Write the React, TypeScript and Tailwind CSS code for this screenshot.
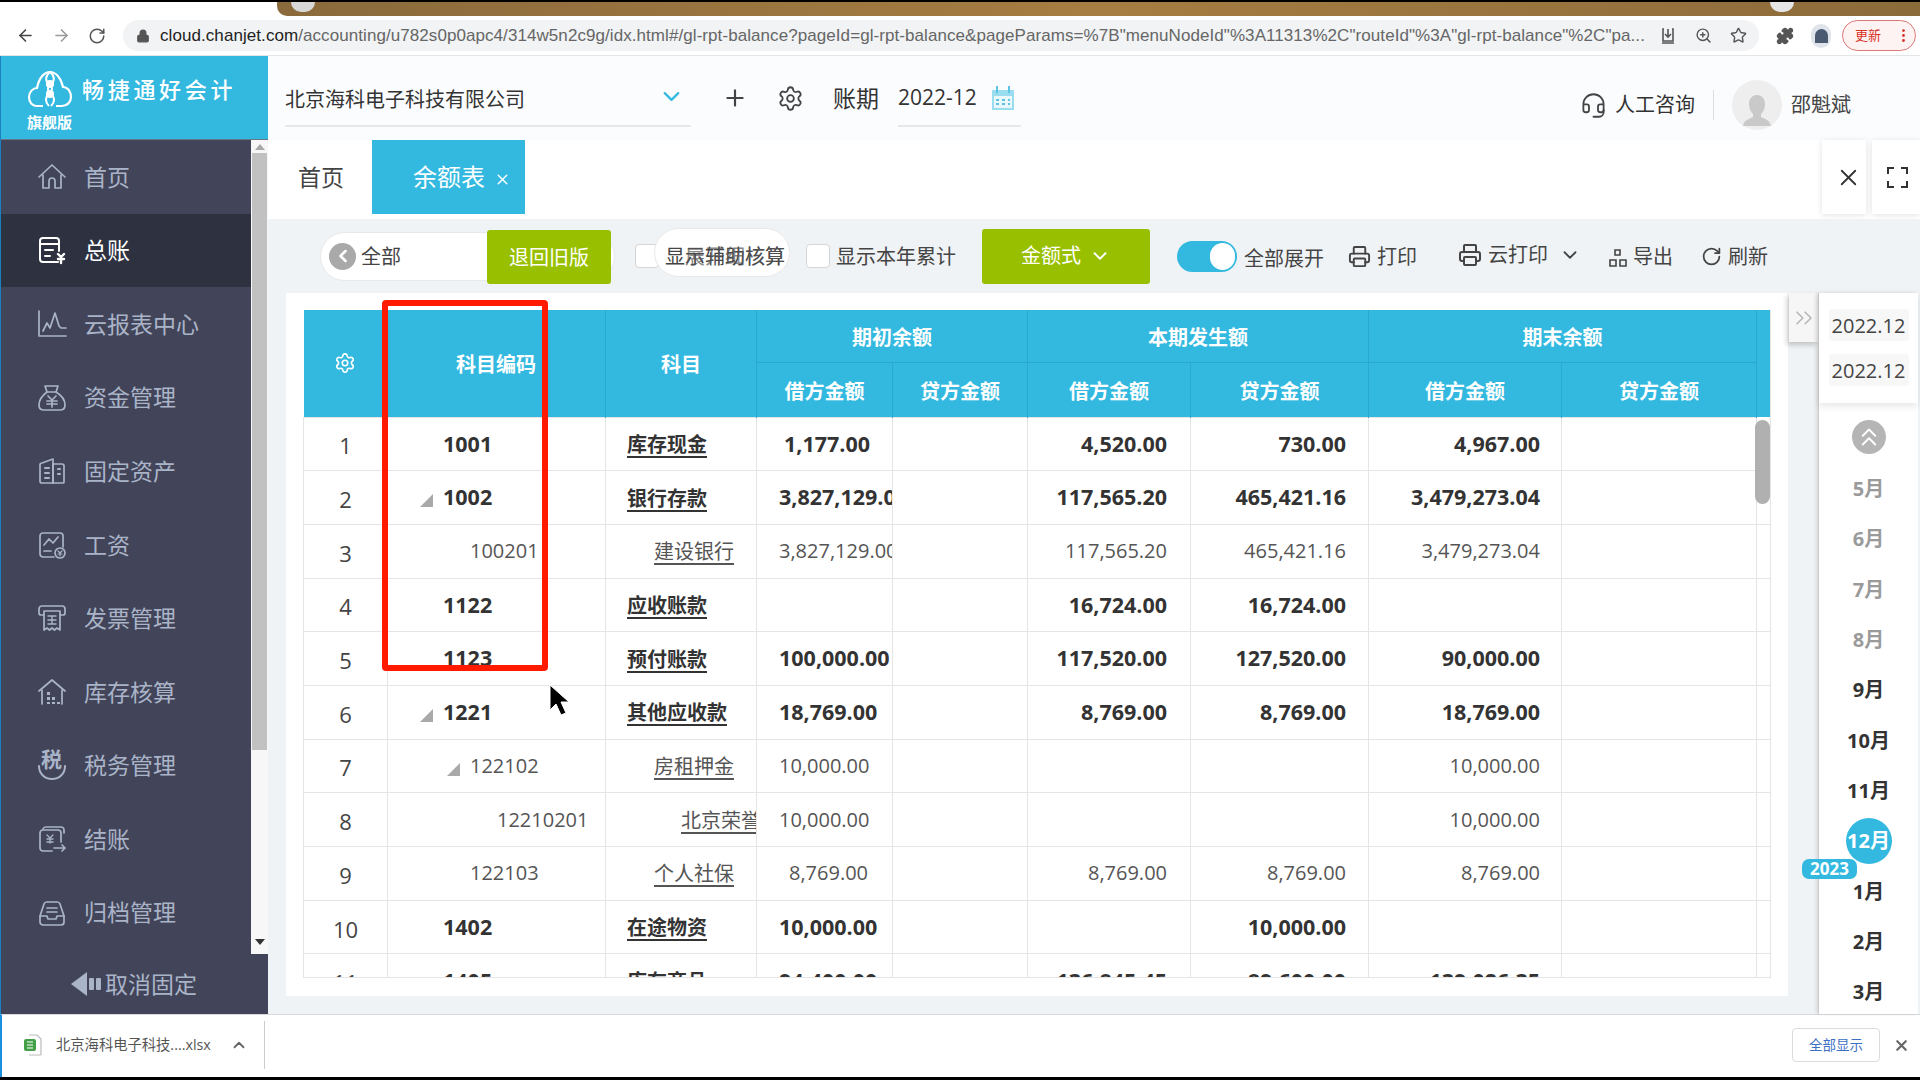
import React from "react";
import {
  ArrowLeft,
  ArrowRight,
  ChevronDown,
  ChevronLeft,
  ChevronUp,
  ChevronsRight,
  ChevronsUp,
  Headset,
  Lock,
  MoreVertical,
  Plus,
  Printer,
  Puzzle,
  RotateCw,
  Settings,
  Star,
  X,
  ZoomIn,
} from "lucide-react";

const iconProps = {
  width: 30,
  height: 30,
  viewBox: "0 0 30 30",
  fill: "none",
  stroke: "currentColor",
  strokeWidth: 1.7,
  strokeLinecap: "round" as const,
  strokeLinejoin: "round" as const,
};

const HomeIcon = () => (
  <svg {...iconProps}>
    <path d="M2 15 15 3l13 12" />
    <path d="M6 13v13h6v-7a3 3 0 0 1 6 0v7h6V13" />
  </svg>
);
const LedgerIcon = () => (
  <svg {...iconProps} strokeWidth={2}>
    <path d="M21 27H6a3 3 0 0 1-3-3V6a3 3 0 0 1 3-3h13a3 3 0 0 1 3 3v10" />
    <path d="M3 9h19M8 15h8M8 21h5" />
    <path d="M21 19l3 3 3-3M24 22v6M21 24h6" strokeWidth={2.4} />
  </svg>
);
const ReportIcon = () => (
  <svg {...iconProps}>
    <path d="M2 2v25h27" />
    <path d="M6 22l4-8 3 5 5-15 4 13 2 2h5" />
  </svg>
);
const MoneyIcon = () => (
  <svg {...iconProps}>
    <path d="M10 9 8 3h13l-2 6" />
    <path d="M10 9h9c5 3 9 8 9 13 0 3-2 5-5 5H7c-3 0-5-2-5-5 0-5 4-10 8-13Z" />
    <path d="m11 13 4 4 4-4M15 17v7M10 18h10M10 21h10" />
  </svg>
);
const BuildingIcon = () => (
  <svg {...iconProps}>
    <path d="M16 3 5 7a2 2 0 0 0-2 2v16a2 2 0 0 0 2 2h21a1 1 0 0 0 1-1V10a2 2 0 0 0-2-2h-9V3Z" />
    <path d="M16 8v19M8 12h4M8 17h4M8 22h4M21 13h2M21 18h2" strokeWidth={2} />
  </svg>
);
const SalaryIcon = () => (
  <svg {...iconProps}>
    <path d="M17 27H6a3 3 0 0 1-3-3V6a3 3 0 0 1 3-3h17a3 3 0 0 1 3 3v11" />
    <path d="m7 15 5-6 4 4 5-6M7 21h7" />
    <circle cx="23" cy="23" r="5" />
    <path d="M21 21l2 2 2-2M23 23v3M21 24h4" strokeWidth={1.2} />
  </svg>
);
const InvoiceIcon = () => (
  <svg {...iconProps}>
    <path d="M7 12H4a2 2 0 0 1-2-2V6a3 3 0 0 1 3-3h20a3 3 0 0 1 3 3v4a2 2 0 0 1-2 2h-3" />
    <path d="M7 8h16v19l-3-2-2.500 2-2.500-2-2.500 2-2.500-2-3 2V8Z" />
    <path d="M11 13h8M11 17h8M11 21h8M15 13v8" strokeWidth={1.4} />
  </svg>
);
const StockIcon = () => (
  <svg {...iconProps}>
    <path d="M2 14 15 3l13 11" />
    <path d="M5 13v14M25 13v14" />
    <path d="M10 15h3v3h-3zM10 20h3v3h-3zM15 20h3v3h-3zM10 25h3v2h-3zM15 25h3v2h-3zM20 25h3v2h-3z" fill="currentColor" stroke="none" />
  </svg>
);
const CloseIcon = () => (
  <svg {...iconProps}>
    <path d="M27 9V6a3 3 0 0 0-3-3H9a3 3 0 0 0-3 2" />
    <path d="M15 27H6a3 3 0 0 1-3-3V9a3 3 0 0 1 3-3h15a3 3 0 0 1 3 3v9" />
    <path d="m10 11 3 3 3-3M13 14v5M10 15h6M10 18h6" strokeWidth={1.3} />
    <path d="M17 24h11m-3-3 3 3-3 3" />
  </svg>
);
const ArchiveIcon = () => (
  <svg {...iconProps}>
    <path d="M3 18 7 6a3 3 0 0 1 3-2h10a3 3 0 0 1 3 2l4 12" />
    <path d="M3 18h7l1 3h8l1-3h7v6a3 3 0 0 1-3 3H6a3 3 0 0 1-3-3v-6Z" />
    <path d="M10 10h10M10 14h10" />
  </svg>
);
const TaxIcon = () => (
  <div className="relative w-[30px] h-[30px]">
    <svg {...iconProps} strokeWidth={2}>
      <path d="M2 15c0 8 6 13 13 13s13-5 13-13" />
    </svg>
    <span className="absolute left-[4px] -top-[4px] text-[21px] leading-[24px] font-bold">税</span>
  </div>
);

const menu = [
  { label: "首页", icon: <HomeIcon /> },
  { label: "总账", icon: <LedgerIcon />, active: true },
  { label: "云报表中心", icon: <ReportIcon /> },
  { label: "资金管理", icon: <MoneyIcon /> },
  { label: "固定资产", icon: <BuildingIcon /> },
  { label: "工资", icon: <SalaryIcon /> },
  { label: "发票管理", icon: <InvoiceIcon /> },
  { label: "库存核算", icon: <StockIcon /> },
  { label: "税务管理", icon: <TaxIcon /> },
  { label: "结账", icon: <CloseIcon /> },
  { label: "归档管理", icon: <ArchiveIcon /> },
];

type Row = {
  code: string;
  name: string;
  level: number;
  open?: boolean;
  bold: boolean;
  d1?: string;
  d1Cls?: string;
  d2?: string;
  c2?: string;
  d3?: string;
};

const rows: Row[] = [
  { code: "1001", name: "库存现金", level: 0, bold: true, d1: "1,177.00", d1Cls: "pl-[27px]", d2: "4,520.00", c2: "730.00", d3: "4,967.00" },
  { code: "1002", name: "银行存款", level: 0, open: true, bold: true, d1: "3,827,129.00", d2: "117,565.20", c2: "465,421.16", d3: "3,479,273.04" },
  { code: "100201", name: "建设银行", level: 1, bold: false, d1: "3,827,129.00", d2: "117,565.20", c2: "465,421.16", d3: "3,479,273.04" },
  { code: "1122", name: "应收账款", level: 0, bold: true, d2: "16,724.00", c2: "16,724.00" },
  { code: "1123", name: "预付账款", level: 0, bold: true, d1: "100,000.00", d2: "117,520.00", c2: "127,520.00", d3: "90,000.00" },
  { code: "1221", name: "其他应收款", level: 0, open: true, bold: true, d1: "18,769.00", d2: "8,769.00", c2: "8,769.00", d3: "18,769.00" },
  { code: "122102", name: "房租押金", level: 1, open: true, bold: false, d1: "10,000.00", d3: "10,000.00" },
  { code: "12210201", name: "北京荣誉", level: 2, bold: false, d1: "10,000.00", d3: "10,000.00" },
  { code: "122103", name: "个人社保", level: 1, bold: false, d1: "8,769.00", d1Cls: "pl-[32px]", d2: "8,769.00", c2: "8,769.00", d3: "8,769.00" },
  { code: "1402", name: "在途物资", level: 0, bold: true, d1: "10,000.00", c2: "10,000.00" },
  { code: "1405", name: "库存商品", level: 0, bold: true, d1: "94,400.00", d2: "136,845.45", c2: "89,600.00", d3: "139,026.35" },
];

const codePad = ["pl-[55px]", "pl-[82px]", "pl-[109px]"];
const namePad = ["pl-[21px]", "pl-[48px]", "pl-[75px]"];
const arrowLeft = ["left-[32px]", "left-[59px]", "left-[86px]"];

const months = [
  { m: "5月", dim: true },
  { m: "6月", dim: true },
  { m: "7月", dim: true },
  { m: "8月", dim: true },
  { m: "9月" },
  { m: "10月" },
  { m: "11月" },
  { m: "12月", active: true },
  { m: "1月" },
  { m: "2月" },
  { m: "3月" },
];

const Checkbox = () => <div className="w-[24px] h-[24px] bg-white border border-[#d5d5d5] rounded-[4px] shrink-0" />;

const App = () => {
  return (
    <div className="w-[1920px] h-[1080px] overflow-hidden relative flex flex-col bg-white text-[#333] [font-family:'Open_Sans','Noto_Sans_CJK_SC',sans-serif]">
      {/* browser tab strip */}
      <div className="h-[16px] flex shrink-0 border-t-2 border-black">
        <div className="w-[277px] bg-white" />
        <div className="flex-1 rounded-bl-[10px] bg-gradient-to-r from-[#8a6a3c] via-[#a67d42] to-[#8c6b3b] flex justify-between px-[14px]">
          <div className="w-[24px] h-[10px] bg-[#d8d8d8] rounded-b-full" />
          <div className="w-[24px] h-[10px] bg-[#e5e5e5] rounded-b-full mr-[112px]" />
        </div>
      </div>
      {/* browser toolbar */}
      <div className="h-[40px] shrink-0 bg-white border-b border-[#e3e5e8] flex items-center pl-[16px] text-[#555]">
        <ArrowLeft size={19} className="text-[#444]" />
        <ArrowRight size={19} className="ml-[17px] text-[#999]" />
        <RotateCw size={18} className="ml-[17px] text-[#555]" />
        <div className="ml-[17px] w-[1636px] h-[31px] rounded-full bg-[#f1f3f4] flex items-center pl-[13px] pr-[12px]">
          <Lock size={14} className="text-[#555] shrink-0" fill="#555" />
          <div className="ml-[10px] text-[17px] tracking-[0.07px] whitespace-nowrap overflow-hidden w-[1486px] [font-family:'Liberation_Sans',sans-serif]">
            <span className="text-[#222]">cloud.chanjet.com</span>
            <span className="text-[#666]">/accounting/u782s0p0apc4/314w5n2c9g/idx.html#/gl-rpt-balance?pageId=gl-rpt-balance&amp;pageParams=%7B"menuNodeId"%3A11313%2C"routeId"%3A"gl-rpt-balance"%2C"pa...</span>
          </div>
          <svg width="18" height="18" viewBox="0 0 18 18" fill="none" stroke="#555" strokeWidth="1.6" className="ml-[14px] shrink-0">
            <path d="M5 2H4v12h10V2h-1M9 2v8M6 7l3 3 3-3M3 16h12" />
          </svg>
          <ZoomIn size={17} className="ml-[18px] shrink-0 text-[#555]" />
          <Star size={17} className="ml-[18px] shrink-0 text-[#555]" />
        </div>
        <Puzzle size={18} className="ml-[17px] text-[#555]" fill="#555" />
        <div className="ml-[17px] w-[20px] h-[24px] rounded-full bg-[#dfe3ea] flex items-center justify-center">
          <div className="w-[13px] h-[14px] rounded-t-full bg-[#4a5a70]" />
        </div>
        <div className="ml-[11px] w-[74px] h-[31px] rounded-full border border-[#d77] bg-[#fdf3f2] flex items-center justify-between pl-[12px] pr-[3px] text-[#d93025] text-[13px]">
          更新
          <MoreVertical size={17} />
        </div>
      </div>

      <div className="flex-1 flex min-h-0">
        {/* sidebar */}
        <div className="w-[268px] shrink-0 flex flex-col bg-[#424559] border-l border-[#1b80c0] text-[#aab4c8]">
          <div className="h-[84px] shrink-0 bg-[#33b9e0] border-b border-[#6a7488] text-white relative">
            <svg width="46" height="40" viewBox="0 0 46 40" fill="none" stroke="#fff" strokeWidth="2.2" className="absolute left-[26px] top-[13px]">
              <path d="M16 37H10C5 37 2 33 2 28c0-5 4-9 8-9 2-10 7-16 13-16s11 6 13 15c5 0 8 5 8 10 0 5-4 9-9 9h-6" />
              <path d="M23 3c5 4 5 9 1 12-4 3-4 7 0 10 4 3 4 8 0 12" strokeWidth="2" />
              <path d="M23 3c-5 4-5 9-1 12 4 3 4 7 0 10-4 3-4 8 0 12" strokeWidth="2" />
              <circle cx="23" cy="15" r="3" fill="#fff" />
              <circle cx="23" cy="25" r="3" fill="#fff" />
            </svg>
            <div className="absolute left-[81px] top-[16px] text-[22px] leading-[34px] font-medium tracking-[3.7px] whitespace-nowrap">畅捷通好会计</div>
            <div className="absolute left-[26px] top-[56px] text-[15px] leading-[20px] font-bold whitespace-nowrap">旗舰版</div>
          </div>
          <div className="flex-1 flex min-h-0">
            <div className="flex-1 overflow-hidden">
              {menu.map((item) => (
                <div
                  key={item.label}
                  className={`h-[73.6px] flex items-center pl-[36px] ${item.active ? "bg-[#2d3140] text-white" : ""}`}
                >
                  <div className="w-[30px] h-[30px] shrink-0">{item.icon}</div>
                  <span className="ml-[17px] text-[23px]">{item.label}</span>
                </div>
              ))}
            </div>
            <div className="w-[17px] shrink-0 bg-[#f7f7f7] flex flex-col items-center relative">
              <div className="mt-[4px] w-0 h-0 border-x-[5px] border-x-transparent border-b-[6px] border-b-[#a8a8a8]" />
              <div className="mt-[3px] w-[15px] h-[597px] bg-[#c1c1c1]" />
              <div className="mt-auto mb-[9px] w-0 h-0 border-x-[5px] border-x-transparent border-t-[6px] border-t-[#333]" />
            </div>
          </div>
          <div className="h-[60px] shrink-0 flex items-center pl-[70px]">
            <div className="w-0 h-0 border-y-[12px] border-y-transparent border-r-[16px] border-r-[#aab4c8]" />
            <div className="ml-[2px] w-[5px] h-[12px] bg-[#aab4c8] rounded-[1px]" />
            <div className="ml-[2px] w-[5px] h-[12px] bg-[#aab4c8] rounded-[1px]" />
            <span className="ml-[4px] text-[23px] whitespace-nowrap">取消固定</span>
          </div>
        </div>

        <div className="flex-1 min-w-0 flex flex-col">
          {/* app header */}
          <div className="h-[84px] shrink-0 bg-[#fbfcfd] flex items-center pl-[17px]">
            <div className="self-start w-[406px] h-[71px] border-b-2 border-[#e6e8ea] flex items-center justify-between pr-[6px] pt-[18px]">
              <span className="text-[20px]">北京海科电子科技有限公司</span>
              <ChevronDown size={27} className="text-[#33b9e0] mt-[-6px]" />
            </div>
            <Plus size={26} className="ml-[31px] text-[#444]" />
            <Settings size={27} className="ml-[29px] text-[#444]" strokeWidth={1.6} />
            <span className="ml-[29px] text-[23px]">账期</span>
            <div className="self-start ml-[19px] h-[71px] w-[123px] border-b-2 border-[#e6e8ea] flex items-center pt-[15px]">
              <span className="text-[21px]">2022-12</span>
              <svg width="24" height="26" viewBox="0 0 24 26" className="ml-[14px]" fill="#5cc3e4">
                <path d="M1 5h22v20H1z" fill="#9adcf0" />
                <path d="M3 11h18v12H3z" fill="#eaf8fc" />
                <path d="M5 1h2v7H5zM17 1h2v7h-2zM5 14h3v2H5zM11 14h3v2h-3zM17 14h2v2h-2zM5 18h3v2H5zM11 18h3v2h-3zM17 18h2v2h-2z" />
              </svg>
            </div>
            <div className="flex items-center mt-[14px] ml-[559px]">
              <Headset size={27} className="text-[#444]" strokeWidth={1.6} />
              <span className="ml-[8px] text-[20px]">人工咨询</span>
              <div className="ml-[18px] w-px h-[30px] bg-[#ddd]" />
              <div className="ml-[18px] w-[50px] h-[50px] rounded-full bg-[#eeeeee] flex items-end justify-center overflow-hidden">
                <svg width="32" height="36" viewBox="0 0 32 36" fill="#c9c9c9">
                  <path d="M16 1c5 0 8 4 8 9s-2 8-4 10v3c4 2 9 3 10 9H2c1-6 6-7 10-9v-3c-2-2-4-5-4-10s3-9 8-9Z" />
                </svg>
              </div>
              <span className="ml-[9px] text-[20px] text-[#444]">邵魁斌</span>
            </div>
          </div>
          {/* tabs */}
          <div className="h-[79px] shrink-0 bg-white flex items-start">
            <div className="w-[104px] h-[74px] flex items-center justify-center pl-[2px] text-[23px] text-[#444]">首页</div>
            <div className="w-[153px] h-[74px] bg-[#33b9e0] text-white flex items-center pl-[41px] text-[24px]">
              余额表
              <X size={17} className="ml-[9px] mt-[4px]" />
            </div>
            <div className="ml-auto w-[44px] h-[74px] flex items-center justify-center pl-[8px] shadow-[0_1px_6px_rgba(0,0,0,0.12)] mr-[6px]">
              <X size={27} className="text-[#333]" strokeWidth={1.6} />
            </div>
            <div className="w-[48px] h-[74px] flex items-center justify-center pl-[2px] shadow-[0_1px_6px_rgba(0,0,0,0.12)]">
              <svg width="21" height="21" viewBox="0 0 21 21" fill="none" stroke="#333" strokeWidth="2">
                <path d="M1 7V1h6M14 1h6v6M20 14v6h-6M7 20H1v-6" />
              </svg>
            </div>
          </div>
          {/* toolbar */}
          <div className="h-[74px] shrink-0 bg-[#f0f3f5] flex items-center pl-[52px] text-[20px] text-[#444]">
            <div className="relative w-[295px] h-[49px] rounded-full bg-white border border-[#e8e8e8] flex items-center pl-[8px]">
              <div className="w-[27px] h-[27px] rounded-full bg-[#a9a9a9] flex items-center justify-center">
                <ChevronLeft size={20} className="text-white" strokeWidth={3} />
              </div>
              <span className="ml-[5px] mt-[2px]">全部</span>
              <div className="absolute left-[166px] -top-[3px] w-[124px] h-[54px] rounded-[3px] bg-[#98c000] text-white flex items-center justify-center pt-[3px]">退回旧版</div>
            </div>
            <div className="ml-[20px] flex items-center relative">
              <Checkbox />
              <div className="absolute left-[19px] -top-[13px] w-[136px] h-[49px] rounded-full bg-white border border-[#e8e8e8]" />
              <span className="relative ml-[6px] mt-[1px] whitespace-nowrap">显示辅助核算</span>
              <span className="absolute left-[50px] top-[1px] whitespace-nowrap opacity-70 text-[#555]">展开细核算</span>
            </div>
            <div className="ml-[21px] flex items-center">
              <Checkbox />
              <span className="ml-[6px] mt-[1px] whitespace-nowrap">显示本年累计</span>
            </div>
            <div className="ml-[26px] w-[168px] h-[55px] rounded-[3px] bg-[#98c000] text-white flex items-center justify-center gap-[8px]">
              金额式
              <ChevronDown size={22} />
            </div>
            <div className="ml-[27px] w-[60px] h-[31px] rounded-full bg-[#33b9e0] flex items-center justify-end pr-[2px]">
              <div className="w-[25px] h-[27px] rounded-full bg-white" />
            </div>
            <span className="ml-[7px] whitespace-nowrap mt-[5px]">全部展开</span>
            <Printer size={23} className="ml-[24px] text-[#444] mt-[1px]" />
            <span className="ml-[6px] mt-[1px] whitespace-nowrap">打印</span>
            <Printer size={24} className="ml-[41px] text-[#444] mt-[-2px]" />
            <span className="ml-[6px] whitespace-nowrap mt-[-2px]">云打印</span>
            <ChevronDown size={22} className="ml-[11px] text-[#444] mt-[-2px]" />
            <svg width="18" height="18" viewBox="0 0 18 18" fill="none" stroke="#444" strokeWidth="1.6" className="ml-[28px] mt-[3px]">
              <path d="M6 1h5v5H6zM1 11h6v6H1zM11 11h6v6h-6z" />
            </svg>
            <span className="ml-[6px] mt-[1px] whitespace-nowrap">导出</span>
            <RotateCw size={21} className="ml-[28px] text-[#444] mt-[1px]" />
            <span className="ml-[6px] mt-[1px] whitespace-nowrap">刷新</span>
          </div>

          {/* content */}
          <div className="flex-1 min-h-0 bg-[#f0f3f5] flex">
            <div className="ml-[18px] w-[1502px] h-[703px] bg-white pt-[17px] px-[17px]">
              <div className="relative h-[668px] overflow-hidden border-b border-r border-[#e5e5e5]">
                <table className="w-[1468px] table-fixed border-collapse text-[20px]">
                  <colgroup>
                    <col className="w-[84px]" />
                    <col className="w-[218px]" />
                    <col className="w-[151px]" />
                    <col className="w-[136px]" />
                    <col className="w-[135px]" />
                    <col className="w-[163px]" />
                    <col className="w-[178px]" />
                    <col className="w-[193px]" />
                    <col className="w-[195px]" />
                    <col className="w-[15px]" />
                  </colgroup>
                  <thead className="bg-[#33b9e0] text-white font-bold">
                    <tr className="h-[52px]">
                      <th rowSpan={2} className="border-r border-[#2aa9cf]">
                        <Settings size={22} className="mx-auto" strokeWidth={1.8} />
                      </th>
                      <th rowSpan={2} className="border-r border-[#2aa9cf] text-right pr-[69px] pt-[4px]">科目编码</th>
                      <th rowSpan={2} className="border-r border-[#2aa9cf] pt-[4px]">科目</th>
                      <th colSpan={2} className="border-r border-b border-[#2aa9cf] pt-[4px]">期初余额</th>
                      <th colSpan={2} className="border-r border-b border-[#2aa9cf] pt-[4px]">本期发生额</th>
                      <th colSpan={2} className="border-r border-b border-[#2aa9cf] pt-[4px]">期末余额</th>
                      <th rowSpan={2} />
                    </tr>
                    <tr className="h-[55px]">
                      <th className="border-r border-[#2aa9cf] pt-[4px]">借方金额</th>
                      <th className="border-r border-[#2aa9cf] pt-[4px]">贷方金额</th>
                      <th className="border-r border-[#2aa9cf] pt-[4px]">借方金额</th>
                      <th className="border-r border-[#2aa9cf] pt-[4px]">贷方金额</th>
                      <th className="border-r border-[#2aa9cf] pt-[4px]">借方金额</th>
                      <th className="border-r border-[#2aa9cf] pt-[4px]">贷方金额</th>
                    </tr>
                  </thead>
                  <tbody>
                    {rows.map((r, i) => {
                      const num = r.bold ? "text-[21.500px]" : "";
                      return (
                        <tr key={r.code} className={`h-[53.7px] ${r.bold ? "font-bold text-[#333]" : "text-[#555]"}`}>
                          <td className="border border-[#e5e5e5] text-center text-[22px] font-normal text-[#444] pt-[4px]">{i + 1}</td>
                          <td className={`relative border border-[#e5e5e5] ${num} ${codePad[r.level]}`}>
                            {r.open && (
                              <div className={`absolute top-[23px] ${arrowLeft[r.level]} w-0 h-0 border-l-[13px] border-l-transparent border-b-[13px] border-b-[#a9a9a9]`} />
                            )}
                            {r.code}
                          </td>
                          <td className={`border border-[#e5e5e5] overflow-hidden whitespace-nowrap pt-[2px] ${namePad[r.level]}`}>
                            <span className="underline underline-offset-4">{r.name}</span>
                          </td>
                          <td className={`border border-[#e5e5e5] overflow-hidden whitespace-nowrap ${num} ${r.d1Cls ?? "pl-[22px]"}`}>{r.d1}</td>
                          <td className="border border-[#e5e5e5]" />
                          <td className={`border border-[#e5e5e5] text-right pr-[23px] ${num}`}>{r.d2}</td>
                          <td className={`border border-[#e5e5e5] text-right pr-[22px] ${num}`}>{r.c2}</td>
                          <td className={`border border-[#e5e5e5] text-right pr-[21px] ${num}`}>{r.d3}</td>
                          <td className="border border-[#e5e5e5]" />
                          <td className="border-b border-[#e5e5e5]" />
                        </tr>
                      );
                    })}
                  </tbody>
                </table>
                <div className="absolute right-0 top-[110px] w-[15px] h-[84px] rounded-full bg-[#b0b0b0]" />
              </div>
            </div>

            {/* period panel */}
            <div className="ml-px w-[29px] h-[49px] bg-[#f6f6f6] shadow-[-2px_3px_5px_rgba(0,0,0,0.2)] flex items-center justify-center">
              <ChevronsRight size={28} className="text-[#b5b5b5]" strokeWidth={1.3} />
            </div>
            <div className="w-[100px] border-l border-[#ccc] bg-white shadow-[-2px_0_3px_rgba(0,0,0,0.1)] flex flex-col items-center relative">
              <div className="w-full h-[110px] shrink-0 shadow-[0_3px_8px_rgba(0,0,0,0.1)] flex flex-col items-center pt-[16px] gap-[13px] text-[20px] text-[#444]">
                <div className="w-[80px] h-[32px] pt-[2px] bg-[#f7f7f7] rounded-[3px] flex items-center justify-center">2022.12</div>
                <div className="w-[80px] h-[32px] pt-[2px] bg-[#f7f7f7] rounded-[3px] flex items-center justify-center">2022.12</div>
              </div>
              <div className="mt-[17px] w-[34px] h-[34px] rounded-full bg-[#b5b5b5] flex items-center justify-center shrink-0">
                <ChevronsUp size={30} className="text-white" strokeWidth={1.5} />
              </div>
              <div className="mt-[10px] flex flex-col items-center">
                {months.map((x) => (
                  <div key={x.m} className="h-[50.3px] w-[46px] flex items-center justify-center">
                    <div
                      className={`flex items-center justify-center text-[20px] font-bold whitespace-nowrap ${
                        x.active ? "w-[46px] h-[46px] rounded-full bg-[#33b9e0] text-white" : x.dim ? "text-[#9a9a9a]" : "text-[#333]"
                      }`}
                    >
                      {x.m}
                    </div>
                  </div>
                ))}
              </div>
              <div className="absolute left-[-17px] top-[566px] w-[55px] h-[20px] rounded-[7px] bg-[#33b9e0] text-white text-[17px] font-bold flex items-center justify-center">2023</div>
            </div>
          </div>
        </div>
      </div>

      {/* downloads shelf */}
      <div className="h-[63px] shrink-0 bg-white border-t border-[#d8dadd] border-l-2 border-l-[#1a8fe0] flex items-center pl-[20px] pb-[2px]">
        <svg width="18" height="22" viewBox="0 0 18 22" fill="none" className="ml-[2px]">
          <path d="M5 1h8l4 4v15a1 1 0 0 1-1 1H5" stroke="#bbb" strokeWidth="1.2" />
          <rect x="0" y="5" width="12" height="12" rx="2" fill="#43a047" />
          <path d="M3 8h6M3 11h6M3 14h6" stroke="#fff" strokeWidth="1.2" />
        </svg>
        <span className="ml-[14px] text-[14.300px] text-[#555] whitespace-nowrap">北京海科电子科技....xlsx</span>
        <ChevronUp size={18} className="ml-[19px] text-[#666]" strokeWidth={2.4} />
        <div className="ml-[16px] w-px h-[48px] bg-[#ccc]" />
        <div className="ml-auto w-[88px] h-[34px] rounded-[4px] border border-[#dcdcdc] flex items-center justify-center text-[13.500px] text-[#3c6fc4]">全部显示</div>
        <X size={17} className="ml-[13px] mr-[10px] text-[#666]" strokeWidth={3} />
      </div>
      <div className="h-[3px] shrink-0 bg-black" />

      {/* recording annotation and pointer */}
      <div className="absolute left-[382px] top-[300px] w-[166px] h-[371px] border-[6px] border-[#ff1a00] rounded-[4px] pointer-events-none" />
      <svg width="22" height="34" viewBox="0 0 22 34" className="absolute left-[549px] top-[684px]">
        <path d="M1 1v25l6-6 5 11 5-2-5-11h8L1 1Z" fill="#000" stroke="#fff" strokeWidth="1" />
      </svg>
    </div>
  );
};

export default App;
